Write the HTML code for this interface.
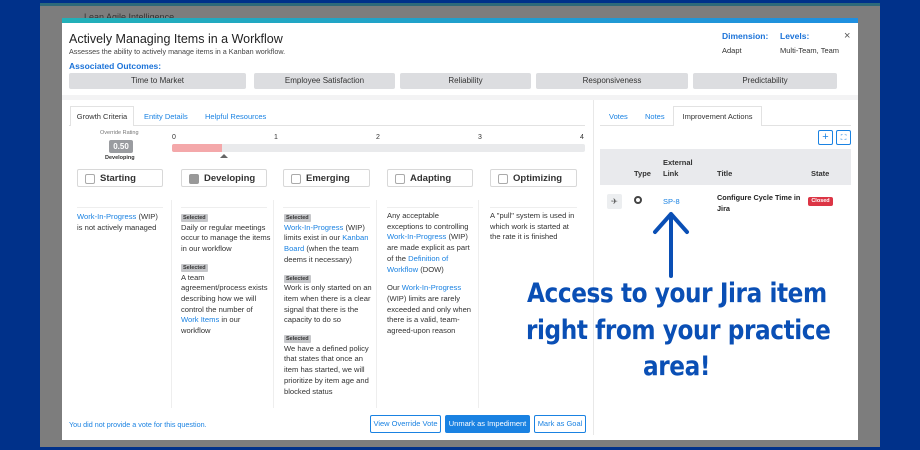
<!DOCTYPE html>
<html><head><meta charset="utf-8"><style>
*{margin:0;padding:0;box-sizing:border-box}
body{width:920px;height:450px;background:#00318a;position:relative;overflow:hidden;font-family:"Liberation Sans",sans-serif;color:#333}
.a{position:absolute}
.bl{color:#1a82e2}
.pill{position:absolute;top:73px;height:16px;background:#dcdde0;border-radius:2px;font-size:8px;text-align:center;line-height:16px;color:#333}
.card{position:absolute;top:169px;height:18px;border:1px solid #d8d8d8;border-radius:2px;font-size:9.5px;font-weight:bold;line-height:17px;padding-left:22px;color:#333}
.card:before{content:"";position:absolute;left:7px;top:4px;width:8px;height:8px;border:1px solid #aaa;border-radius:2px;background:#fff}
.card.chk:before{background:#999;border-color:#999}
.col{position:absolute;top:212px;font-size:7.6px;line-height:10.7px;color:#333}
.sel{display:inline-block;background:#c6c7ca;font-size:5.5px;font-weight:bold;padding:0 2px;line-height:8px;border-radius:1px;margin-top:2px}
.vd{position:absolute;top:200px;width:1px;height:208px;background:#eee}
.btn{position:absolute;top:415px;height:18px;border:1px solid #1a82e2;border-radius:2px;font-size:7.5px;text-align:center;line-height:16px;color:#1a82e2}
.big{position:absolute;font-size:27px;font-weight:bold;color:#0a4fb5;font-family:"DejaVu Sans","Liberation Sans",sans-serif;letter-spacing:-0.5px;white-space:nowrap;transform:scaleX(0.86);transform-origin:left top}
</style></head><body>
<div class="a" style="left:40px;top:3px;width:840px;height:444px;background:#7d7d7d"></div>
<div class="a" style="left:40px;top:3px;width:840px;height:3px;background:#2f6a7a"></div>
<div class="a" style="left:84px;top:12px;font-size:9px;color:#333">Lean Agile Intelligence</div>
<div class="a" style="left:62px;top:18px;width:796px;height:422px;background:#fff"></div>
<div class="a" style="left:62px;top:18px;width:796px;height:5px;background:linear-gradient(90deg,#22b0b8,#1f8fe0)"></div>
<div class="a" style="left:69px;top:32px;font-size:12.5px;color:#222">Actively Managing Items in a Workflow</div>
<div class="a" style="left:69px;top:47px;font-size:7.2px;color:#444">Assesses the ability to actively manage items in a Kanban workflow.</div>
<div class="a bl" style="left:69px;top:61px;font-size:8.5px;font-weight:bold;color:#1a72d8">Associated Outcomes:</div>
<div class="a" style="left:722px;top:31px;font-size:8.5px;font-weight:bold;color:#1a72d8">Dimension:</div>
<div class="a" style="left:780px;top:31px;font-size:8.5px;font-weight:bold;color:#1a72d8">Levels:</div>
<div class="a" style="left:722px;top:46px;font-size:7.5px">Adapt</div>
<div class="a" style="left:780px;top:46px;font-size:7.5px">Multi-Team, Team</div>
<div class="a" style="left:844px;top:30px;font-size:11px;color:#555">×</div>
<div class="pill" style="left:69px;width:177px">Time to Market</div>
<div class="pill" style="left:254px;width:141px">Employee Satisfaction</div>
<div class="pill" style="left:400px;width:131px">Reliability</div>
<div class="pill" style="left:536px;width:152px">Responsiveness</div>
<div class="pill" style="left:693px;width:144px">Predictability</div>
<div class="a" style="left:62px;top:95px;width:796px;height:5px;background:#f3f3f4"></div>
<div class="a" style="left:69px;top:125px;width:516px;height:1px;background:#e2e2e2"></div>
<div class="a" style="left:70px;top:106px;width:64px;height:20px;border:1px solid #e2e2e2;border-bottom:none;background:#fff;font-size:7.5px;text-align:center;line-height:19px">Growth Criteria</div>
<div class="a bl" style="left:144px;top:112px;font-size:7.5px">Entity Details</div>
<div class="a bl" style="left:205px;top:112px;font-size:7.5px">Helpful Resources</div>
<div class="a" style="left:100px;top:130px;font-size:5.5px;color:#777">Override Rating</div>
<div class="a" style="left:109px;top:140px;width:24px;height:13px;background:#9a9ca0;border-radius:2px;color:#fff;font-size:8px;font-weight:bold;text-align:center;line-height:13px">0.50</div>
<div class="a" style="left:105px;top:155px;font-size:5.5px;font-weight:bold">Developing</div>
<div class="a" style="left:172px;top:134px;font-size:7px">0</div>
<div class="a" style="left:274px;top:134px;font-size:7px">1</div>
<div class="a" style="left:376px;top:134px;font-size:7px">2</div>
<div class="a" style="left:478px;top:134px;font-size:7px">3</div>
<div class="a" style="left:580px;top:134px;font-size:7px">4</div>
<div class="a" style="left:172px;top:144px;width:413px;height:8px;background:#e9eaec;border-radius:2px"></div>
<div class="a" style="left:172px;top:144px;width:50px;height:8px;background:#f4a8aa;border-radius:2px 0 0 2px"></div>
<div class="a" style="left:220px;top:154px;width:0;height:0;border-left:4px solid transparent;border-right:4px solid transparent;border-bottom:4px solid #666"></div>
<div class="card" style="left:77px;width:86px">Starting</div>
<div class="card chk" style="left:181px;width:86px">Developing</div>
<div class="card" style="left:283px;width:87px">Emerging</div>
<div class="card" style="left:387px;width:86px">Adapting</div>
<div class="card" style="left:490px;width:87px">Optimizing</div>
<div class="vd" style="left:171px"></div><div class="vd" style="left:273px"></div><div class="vd" style="left:376px"></div><div class="vd" style="left:478px"></div>
<div class="a" style="left:77px;top:207px;width:86px;height:1px;background:#eee"></div>
<div class="a" style="left:181px;top:207px;width:86px;height:1px;background:#eee"></div>
<div class="a" style="left:283px;top:207px;width:87px;height:1px;background:#eee"></div>
<div class="a" style="left:387px;top:207px;width:86px;height:1px;background:#eee"></div>
<div class="a" style="left:490px;top:207px;width:87px;height:1px;background:#eee"></div>
<div class="col" style="left:77px;width:88px"><span class="bl">Work-In-Progress</span> (WIP) is not actively managed</div>
<div class="col" style="left:181px;width:90px"><span class="sel">Selected</span><br>Daily or regular meetings occur to manage the items in our workflow<br><span class="sel" style="margin-top:9px">Selected</span><br>A team agreement/process exists describing how we will control the number of <span class="bl">Work Items</span> in our workflow</div>
<div class="col" style="left:284px;width:90px"><span class="sel">Selected</span><br><span class="bl">Work-In-Progress</span> (WIP) limits exist in our <span class="bl">Kanban Board</span> (when the team deems it necessary)<br><span class="sel" style="margin-top:9px">Selected</span><br>Work is only started on an item when there is a clear signal that there is the capacity to do so<br><span class="sel" style="margin-top:9px">Selected</span><br>We have a defined policy that states that once an item has started, we will prioritize by item age and blocked status</div>
<div class="col" style="left:387px;width:90px;top:211px">Any acceptable exceptions to controlling <span class="bl">Work-In-Progress</span> (WIP) are made explicit as part of the <span class="bl">Definition of Workflow</span> (DOW)<br><div style="height:8px"></div>Our <span class="bl">Work-In-Progress</span> (WIP) limits are rarely exceeded and only when there is a valid, team-agreed-upon reason</div>
<div class="col" style="left:490px;width:90px;top:211px">A "pull" system is used in which work is started at the rate it is finished</div>
<div class="a bl" style="left:69px;top:420px;font-size:7.2px">You did not provide a vote for this question.</div>
<div class="btn" style="left:370px;width:71px">View Override Vote</div>
<div class="btn" style="left:445px;width:85px;background:#1a82e2;color:#fff">Unmark as Impediment</div>
<div class="btn" style="left:534px;width:52px">Mark as Goal</div>
<div class="a" style="left:593px;top:100px;width:1px;height:335px;background:#e8e8e8"></div>
<div class="a" style="left:600px;top:125px;width:251px;height:1px;background:#e2e2e2"></div>
<div class="a bl" style="left:609px;top:112px;font-size:7.5px">Votes</div>
<div class="a bl" style="left:645px;top:112px;font-size:7.5px">Notes</div>
<div class="a" style="left:673px;top:106px;width:89px;height:20px;border:1px solid #e2e2e2;border-bottom:none;background:#fff;font-size:7.5px;text-align:center;line-height:19px">Improvement Actions</div>
<div class="a" style="left:818px;top:130px;width:15px;height:15px;border:1px solid #1a82e2;border-radius:2px;color:#1a82e2;font-size:11px;text-align:center;line-height:13px">+</div>
<div class="a" style="left:836px;top:130px;width:15px;height:15px;border:1px solid #1a82e2;border-radius:2px;color:#1a82e2;font-size:8px;text-align:center;line-height:13px">⛶</div>
<div class="a" style="left:600px;top:149px;width:251px;height:36px;background:#e9eaed"></div>
<div class="a" style="left:634px;top:169px;font-size:7.5px;font-weight:bold">Type</div>
<div class="a" style="left:663px;top:157px;font-size:7.5px;font-weight:bold;line-height:11px">External<br>Link</div>
<div class="a" style="left:717px;top:169px;font-size:7.5px;font-weight:bold">Title</div>
<div class="a" style="left:811px;top:169px;font-size:7.5px;font-weight:bold">State</div>
<div class="a" style="left:607px;top:194px;width:15px;height:15px;background:#eceef0;border-radius:2px;font-size:8px;text-align:center;line-height:15px;color:#555">✈</div>
<div class="a" style="left:634px;top:196px;width:8px;height:8px;border:2px solid #444;border-radius:50%"></div>
<div class="a bl" style="left:663px;top:197px;font-size:7.5px">SP-8</div>
<div class="a" style="left:717px;top:192px;font-size:7.3px;font-weight:bold;line-height:11px;color:#222">Configure Cycle Time in<br>Jira</div>
<div class="a" style="left:808px;top:197px;width:25px;height:9px;background:#dc3545;border-radius:2px;color:#fff;font-size:5.5px;font-weight:bold;text-align:center;line-height:9px">Closed</div>
<svg class="a" style="left:650px;top:208px" width="44" height="72"><path d="M21 68V6M5 24L21 6L37 24" stroke="#0a4fb5" stroke-width="4" fill="none" stroke-linecap="round" stroke-linejoin="round"/></svg>
<div class="big" style="left:527px;top:278px">Access to your Jira item</div>
<div class="big" style="left:526px;top:315px">right from your practice</div>
<div class="big" style="left:643px;top:351px">area!</div>
</body></html>
